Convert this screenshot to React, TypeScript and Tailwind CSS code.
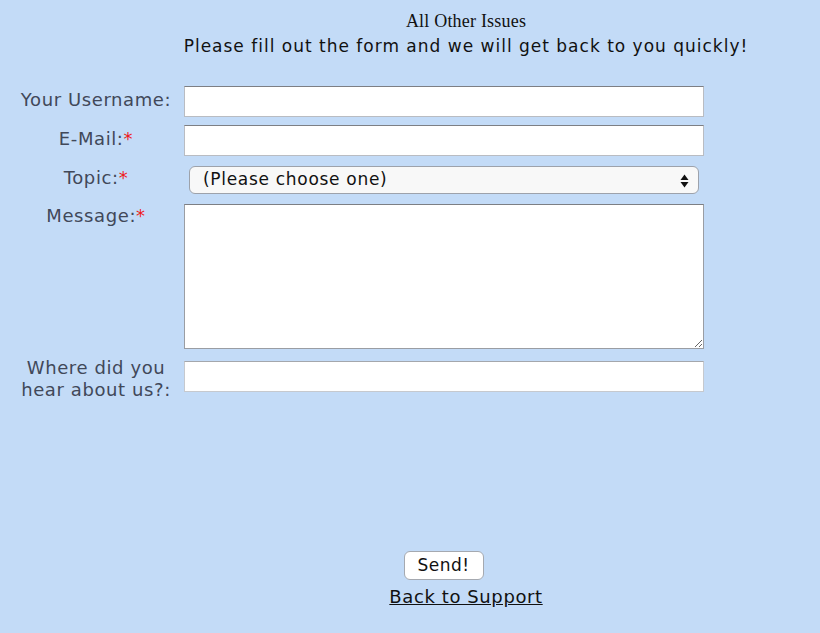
import React from 'react';

const labelCls = "text-[18px] leading-[22px] tracking-[0.6px] text-[#414859] text-center";

function Req() {
  return <span className="text-[#ee1c1c]">*</span>;
}

export default function App() {
  return (
    <div className="min-h-[633px] w-full bg-[#c3dbf7] font-['DejaVu_Sans',sans-serif]">
      {/* Header */}
      <div className="pt-[11px] pl-[112px] w-full flex flex-col items-center">
        <h1 className="font-['Liberation_Serif',serif] text-[18px] leading-[21px] tracking-[0.2px] text-[#111]">All Other Issues</h1>
        <p className="text-[17px] leading-[21px] tracking-[1px] text-[#111] mt-[4px]">
          Please fill out the form and we will get back to you quickly!
        </p>
      </div>

      {/* Form */}
      <form className="mt-[29px] pl-[10px] grid grid-cols-[172px_520px] gap-x-[2px] gap-y-[8px] items-center">
        <div className={`${labelCls} -mt-[4px]`}>Your Username:</div>
        <input className="h-[31px] bg-white border border-[#b9bcc2] border-t-[#7d7f84] outline-none" />

        <div className={`${labelCls} -mt-[4px]`}>E-Mail:<Req /></div>
        <input className="h-[31px] bg-white border border-[#b9bcc2] border-t-[#7d7f84] outline-none" />

        <div className={`${labelCls} -mt-[4px]`}>Topic:<Req /></div>
        <div className="relative px-[5px] py-[2px]">
          <select className="appearance-none w-full h-[28px] rounded-[6px] bg-[#f8f8f8] border border-[#9da2ab] text-[17px] tracking-[0.7px] text-[#111] pl-[13px] outline-none font-['DejaVu_Sans',sans-serif]">
            <option>(Please choose one)</option>
          </select>
          <svg className="absolute right-[15px] top-[10px]" width="9" height="14" viewBox="0 0 9 14">
            <path d="M4.5 0.5 L8.5 6 L0.5 6 Z" fill="#111" />
            <path d="M0.5 8 L8.5 8 L4.5 13.5 Z" fill="#111" />
          </svg>
        </div>

        <div className={`${labelCls} self-start pt-[1px]`}>Message:<Req /></div>
        <textarea className="h-[145px] bg-white border border-[#9a9da3] border-t-[#7d7f84] outline-none resize" />

        <div className={labelCls}>Where did you<br />hear about us?:</div>
        <input className="h-[31px] -mt-[5px] bg-white border border-[#c6c9ce] border-t-[#a4a7ac] outline-none" />
      </form>

      {/* Actions */}
      <div className="mt-[150px] pl-[112px] w-full flex flex-col items-center">
        <button type="button" className="mr-[45px] w-[80px] h-[29px] bg-white rounded-[6px] border border-[#a5a9b0] text-[17px] tracking-[0.5px] text-[#111] font-['DejaVu_Sans',sans-serif] leading-none">
          Send!
        </button>
        <a href="#" className="mt-[6px] text-[18px] leading-[22px] tracking-[0.6px] text-[#111] underline">Back to Support</a>
      </div>
    </div>
  );
}
